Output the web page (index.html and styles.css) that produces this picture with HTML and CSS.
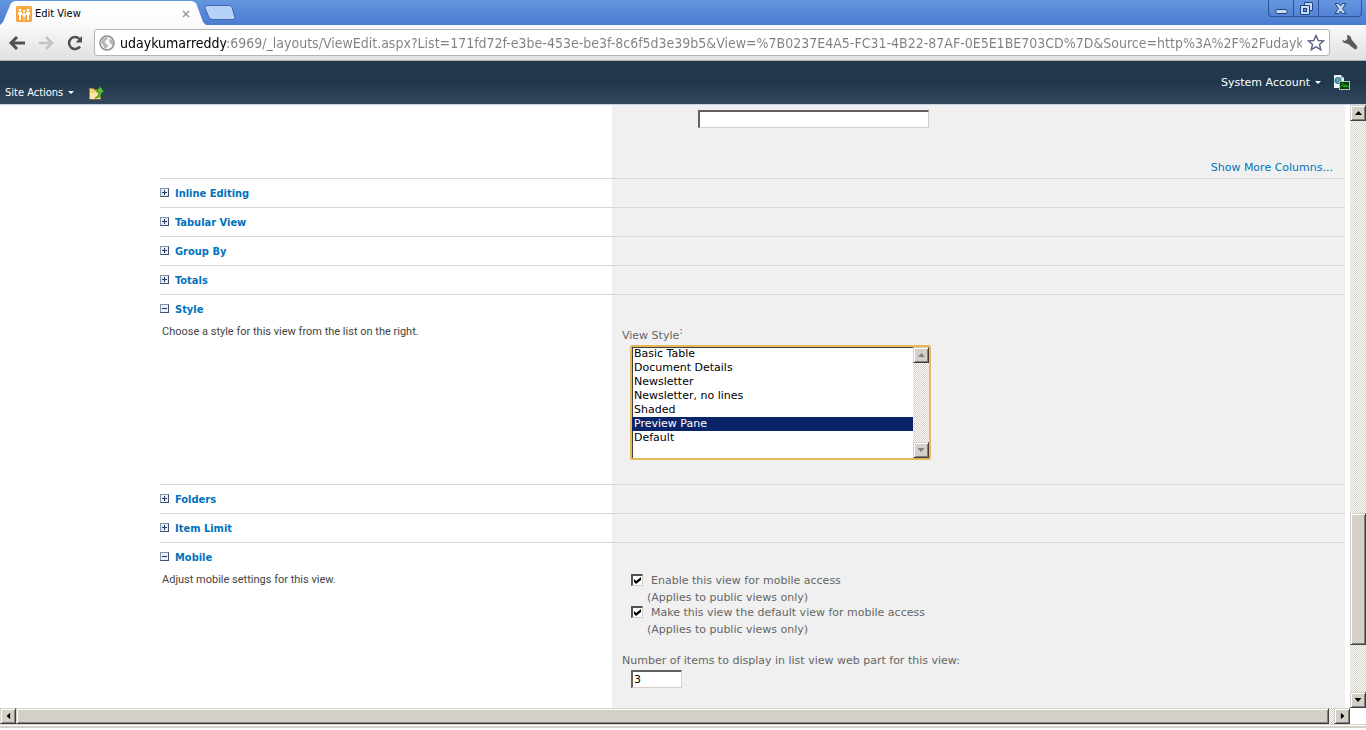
FILE: index.html
```html
<!DOCTYPE html>
<html lang="en">
<head>
  <meta charset="UTF-8" />
  <title>Edit View</title>
  <link rel="stylesheet" href="styles.css">
</head>
<body>
  <header class="tab-strip">
    <div class="tab">
      <svg class="favicon" width="16" height="16" viewBox="0 0 16 16">
        <rect width="16" height="16" rx="2" fill="#f58a14"/>
        <rect x="1" y="1" width="14" height="14" rx="1" fill="#f9a02c" stroke="#fbb65f"/>
        <g fill="#fff">
          <circle cx="4" cy="4" r="1.500"/><circle cx="12" cy="4" r="1.500"/><circle cx="8" cy="5" r="1.300"/>
          <path d="M2 6h4v3H5v5H3V9H2zM10 6h4v3h-1v5h-2V9h-1zM6.500 7h3v3.500h-1V14h-1v-3.500h-1z"/>
        </g>
      </svg>
      <span class="tab-title">Edit View</span>
      <button class="tab-close" aria-label="Close tab">
        <svg width="8" height="8" viewBox="0 0 8 8"><path d="M1 1l6 6M7 1l-6 6" stroke="#999" stroke-width="1.500"/></svg>
      </button>
    </div>
    <button class="new-tab" aria-label="New tab">
      <svg width="32" height="16" viewBox="0 0 32 16"><path d="M3 .5h22q2 0 3 2l3 10q0 2-2 2H9q-3 0-4-2L1 3Q1 .5 3 .5z" fill="#b5d1f5" stroke="#3c67ad"/></svg>
    </button>
    <div class="window-buttons">
      <button aria-label="Minimize"><svg width="13" height="13" viewBox="0 0 13 13"><rect x="1" y="7.500" width="11" height="4" rx="1" fill="#c6daf6" stroke="#24447e"/></svg></button>
      <button aria-label="Restore"><svg width="13" height="13" viewBox="0 0 13 13"><path d="M4.500.5h8v8h-3v4h-9v-9h4z" fill="#c6daf6" stroke="#24447e"/><path d="M4.500 3.500h5v5" fill="none" stroke="#24447e"/><rect x="3.500" y="6.500" width="3" height="3" fill="#5f8ed8" stroke="#24447e"/></svg></button>
      <button class="close" aria-label="Close"><svg width="13" height="11" viewBox="0 0 13 11"><path d="M1 .5h3.500l2 2.500 2-2.500H12L8.500 5.500l3.500 5H8.500l-2-2.500-2 2.500H1l3.500-5z" fill="#c6daf6" stroke="#24447e"/></svg></button>
    </div>
  </header>

  <nav class="toolbar">
    <button aria-label="Back"><svg width="18" height="16" viewBox="0 0 18 16"><path d="M17 8H4M9 2L3 8l6 6" fill="none" stroke="#505050" stroke-width="3"/></svg></button>
    <button aria-label="Forward"><svg width="18" height="16" viewBox="0 0 18 16"><path d="M2 8h12M9 2l6 6-6 6" fill="none" stroke="#c4c4c4" stroke-width="2.500"/></svg></button>
    <button aria-label="Reload"><svg width="18" height="16" viewBox="0 0 18 16"><path d="M14 11.500a6 6 0 1 1-.5-7.500" fill="none" stroke="#505050" stroke-width="2.500"/><path d="M16 1v6.500H9.500z" fill="#505050"/></svg></button>
    <div class="omnibox">
      <svg width="16" height="16" viewBox="0 0 16 16"><circle cx="8" cy="8" r="7" fill="#fafafa" stroke="#8c8c8c" stroke-width="1.500"/><path d="M3 4l4-2 2 1-1 2-2 1v2l2 1 1 2-2 3-2-1-1-3-2-2zM11 3l3 3v5l-2-2-2-2z" fill="#b9b9b9"/></svg>
      <input class="url" type="text" aria-label="Address" value="udaykumarreddy:6969/_layouts/ViewEdit.aspx?List=171fd72f-e3be-453e-be3f-8c6f5d3e39b5&amp;View=%7B0237E4A5-FC31-4B22-87AF-0E5E1BE703CD%7D&amp;Source=http%3A%2F%2Fudayku">
      <button class="star" aria-label="Bookmark this page"><svg width="18" height="17" viewBox="0 0 18 17"><path d="M9 1.500l2.200 5 5.300.4-4 3.500 1.300 5.300L9 12.900l-4.800 2.800 1.300-5.300-4-3.500 5.300-.4z" fill="#fff" stroke="#5f6b87" stroke-width="1.500"/></svg></button>
    </div>
    <button class="wrench" aria-label="Menu"><svg width="17" height="17" viewBox="0 0 17 17"><path d="M6 1q4 0 4.500 4.500L16 12q1 3-2 3.500L6.500 9.500Q2.500 10 1 6l3 1 2.500-2z" fill="#5a5a5a"/></svg></button>
  </nav>

  <div class="ribbon">
    <div class="ribbon-left">
      <button class="site-actions">Site Actions <span class="caret"></span></button>
      <button aria-label="Navigate up">
        <svg width="17" height="16" viewBox="0 0 17 16"><path d="M1.500 3.500h4l1 1.500h6v9h-11z" fill="#f4d77c" stroke="#a8842c"/><path d="M2 8h10v6H2z" fill="#fbe9a8"/><path d="M7 13q4-1 4-6H8.500L12 1.500 16 7h-2.500q0 6-6.500 6z" fill="#5fc437" stroke="#2c8516" stroke-width=".8"/></svg>
      </button>
    </div>
    <div class="ribbon-right">
      <button class="account">System Account <span class="caret"></span></button>
      <svg width="17" height="17" viewBox="0 0 17 17"><path d="M1 1h7l3 3v10H1z" fill="#eef4fb"/><path d="M8 1v3h3" fill="#7e9bbd"/><circle cx="5" cy="6.500" r="3.500" fill="#3c7fc4"/><path d="M3 5l3-1 1 2-3 3z" fill="#5bb45a"/><rect x="6.500" y="7.500" width="10" height="8" fill="#063b0b" stroke="#a9c9a9"/><path d="M7 13l2-2 2 2 2-2 3 2M9 9l5 4" fill="none" stroke="#2bb532"/></svg>
    </div>
  </div>

  <main class="viewport">
    <form class="settings">
      <section class="row columns-row">
        <div class="desc"></div>
        <div class="fields">
          <input class="box column-box" type="text" aria-label="Column name">
          <a class="more" href="#">Show More Columns...</a>
        </div>
      </section>
      <section class="row">
        <div class="desc"><button type="button" class="toggle"><i class="sign plus"></i>Inline Editing</button></div>
        <div class="fields"></div>
      </section>
      <section class="row">
        <div class="desc"><button type="button" class="toggle"><i class="sign plus"></i>Tabular View</button></div>
        <div class="fields"></div>
      </section>
      <section class="row">
        <div class="desc"><button type="button" class="toggle"><i class="sign plus"></i>Group By</button></div>
        <div class="fields"></div>
      </section>
      <section class="row">
        <div class="desc"><button type="button" class="toggle"><i class="sign plus"></i>Totals</button></div>
        <div class="fields"></div>
      </section>
      <section class="row">
        <div class="desc">
          <button type="button" class="toggle"><i class="sign"></i>Style</button>
          <p>Choose a style for this view from the list on the right.</p>
        </div>
        <div class="fields style-fields">
          <label for="viewStyle">View Style<sup>:</sup></label>
          <div class="listbox">
            <select id="viewStyle" size="8">
              <option>Basic Table</option>
              <option>Document Details</option>
              <option>Newsletter</option>
              <option>Newsletter, no lines</option>
              <option>Shaded</option>
              <option selected>Preview Pane</option>
              <option>Default</option>
            </select>
            <div class="scroll vertical disabled">
              <button type="button" class="arrow up" aria-label="Scroll up"></button>
              <button type="button" class="arrow down" aria-label="Scroll down"></button>
            </div>
          </div>
        </div>
      </section>
      <section class="row">
        <div class="desc"><button type="button" class="toggle"><i class="sign plus"></i>Folders</button></div>
        <div class="fields"></div>
      </section>
      <section class="row">
        <div class="desc"><button type="button" class="toggle"><i class="sign plus"></i>Item Limit</button></div>
        <div class="fields"></div>
      </section>
      <section class="row last">
        <div class="desc">
          <button type="button" class="toggle"><i class="sign"></i>Mobile</button>
          <p>Adjust mobile settings for this view.</p>
        </div>
        <div class="fields mobile-fields">
          <div class="check">
            <input type="checkbox" id="mobileView" checked>
            <label for="mobileView">Enable this view for mobile access</label>
          </div>
          <div class="note">(Applies to public views only)</div>
          <div class="check">
            <input type="checkbox" id="mobileDefault" checked>
            <label for="mobileDefault">Make this view the default view for mobile access</label>
          </div>
          <div class="note">(Applies to public views only)</div>
          <label class="count-label" for="itemCount">Number of items to display in list view web part for this view:</label>
          <input class="box count" type="text" id="itemCount" value="3">
        </div>
      </section>
    </form>
    <div class="scroll vertical">
      <button class="arrow up" aria-label="Scroll up"></button>
      <div class="track-before"></div>
      <div class="thumb"></div>
      <div class="track-after"></div>
      <button class="arrow down" aria-label="Scroll down"></button>
    </div>
  </main>

  <div class="bottom">
    <div class="scroll horizontal">
      <button class="arrow left" aria-label="Scroll left"></button>
      <div class="thumb"></div>
      <button class="arrow right" aria-label="Scroll right"></button>
    </div>
    <div class="corner"></div>
  </div>
  <footer class="edge"></footer>
</body>
</html>
```

FILE: styles.css
```css
* {
  box-sizing: border-box;
}
body {
  margin: 0;
  height: 100vh;
  display: flex;
  flex-direction: column;
  overflow: hidden;
  background: #fff;
  color: #666;
  font: 11px/16px "DejaVu Sans", Verdana, sans-serif;
}
button {
  margin: 0;
  padding: 0;
  border: 0;
  background: none;
  color: inherit;
  font: inherit;
  display: flex;
  align-items: center;
}

/* browser frame */
.tab-strip {
  display: flex;
  flex: none;
  height: 25px;
  background: linear-gradient(#6496e0, #4a7bd0);
}
.tab {
  display: flex;
  align-items: center;
  width: 206px;
  padding: 2px 16px 0;
  background: linear-gradient(#fff, #fafafa);
  clip-path: polygon(0 100%, 3px 88%, 11px 12%, 15px 4%, 192px 4%, 196px 12%, 203px 88%, 100% 100%);
}
.tab-title {
  flex: 1;
  margin-left: 3px;
  color: #000;
  font-family: "DejaVu Sans Condensed", Tahoma, sans-serif;
}
.new-tab {
  align-self: flex-start;
  margin: 5px 0 0 -2px;
}
.window-buttons {
  display: flex;
  height: 17px;
  margin: 0 4px 0 auto;
  border: 1px solid #2f5296;
  border-top: 0;
  border-radius: 0 0 4px 4px;
}
.window-buttons button {
  justify-content: center;
  width: 25px;
  border-right: 1px solid #2f5296;
}
.window-buttons .close {
  width: 42px;
  border-right: 0;
}
.toolbar {
  display: flex;
  flex: none;
  align-items: center;
  gap: 11px;
  height: 36px;
  padding: 0 8px;
  background: linear-gradient(#fafafa, #e0e0e0);
  border-bottom: 1px solid #b0b0b0;
}
.omnibox {
  flex: 1;
  display: flex;
  align-items: center;
  gap: 5px;
  height: 27px;
  margin-left: -1px;
  padding: 0 4px;
  border: 1px solid #b4b4b4;
  border-radius: 3px;
  background: #fff;
}
.url {
  flex: 1;
  min-width: 0;
  height: 22px;
  padding: 0;
  border: 0;
  background: linear-gradient(90deg, #000 106px, #808080 106px);
  -webkit-background-clip: text;
  background-clip: text;
  color: transparent;
  font: 14px "DejaVu Sans Condensed", Tahoma, sans-serif;
}

/* ribbon */
.ribbon {
  display: flex;
  flex: none;
  justify-content: space-between;
  height: 44px;
  padding: 0 16px 0 5px;
  background: linear-gradient(#21374c 50%, #33485f);
  border-bottom: 1px solid #c5d3e3;
  color: #fff;
}
.ribbon-left {
  display: flex;
  align-items: center;
  gap: 14px;
  padding-top: 20px;
}
.ribbon-right {
  display: flex;
  align-items: center;
  gap: 12px;
}
.site-actions {
  font-family: "DejaVu Sans Condensed", Tahoma, sans-serif;
}
.caret {
  margin-left: 5px;
  border: 3px solid transparent;
  border-top-color: #fff;
  border-bottom: 0;
}

/* settings */
.viewport {
  display: flex;
  flex: 1;
  min-height: 0;
}
.settings {
  display: flex;
  flex-direction: column;
  flex: 1;
  padding: 0 5px 0 160px;
  overflow: hidden;
}
.row {
  display: grid;
  flex: none;
  grid-template-columns: 452px 1fr;
  min-height: 29px;
  border-top: 1px solid #d8d8d8;
}
.columns-row {
  min-height: 73px;
  border-top: 0;
}
.last {
  flex: 1;
}
.fields {
  padding: 0 10px;
  background: #f0f0f0;
}
.desc {
  padding-top: 7px;
  font-family: "DejaVu Sans Condensed", Tahoma, sans-serif;
}
.desc p {
  margin: 6px 2px 0;
  color: #444;
  font-family: Roboto, Tahoma, sans-serif;
}
.toggle {
  align-items: flex-start;
  color: #0072bc;
  font-weight: bold;
}
.sign {
  width: 9px;
  height: 9px;
  margin: 2px 6px 0 0;
  border: 1px solid #8192ab;
  border-right-color: #3b4f70;
  border-bottom-color: #3b4f70;
  background: linear-gradient(#26395c, #26395c) center / 5px 1px no-repeat, #e9eef5;
}
.plus {
  background: linear-gradient(#26395c, #26395c) center / 5px 1px no-repeat, linear-gradient(#26395c, #26395c) center / 1px 5px no-repeat, #e9eef5;
}
.box {
  display: block;
  height: 18px;
  padding: 0 1px;
  border: 1px solid #d4d0c8;
  border-top: 2px solid #606060;
  border-left: 2px solid #606060;
  background: #fff;
  color: #000;
  font: inherit;
}
.column-box {
  width: 231px;
  margin: 5px 0 32px 76px;
}
.more {
  display: block;
  padding-right: 2px;
  color: #0072bc;
  text-align: right;
  text-decoration: none;
}
.style-fields {
  padding-top: 33px;
  padding-bottom: 24px;
}
.style-fields label {
  display: block;
  height: 17px;
}
sup {
  font-size: 11px;
  line-height: 0;
}
.listbox {
  display: flex;
  width: 301px;
  height: 115px;
  margin-left: 8px;
  border: 2px solid #e5b85c;
  border-radius: 2px;
  background: #fff;
}
.listbox select {
  flex: 1;
  height: 111px;
  padding: 0;
  border: 0;
  border-radius: 0;
  outline: 0;
  background: #fff;
  box-shadow: inset 1px 1px #404040;
  color: #000;
  font: inherit;
  overflow: hidden;
}
.listbox option {
  min-height: 14px;
  height: 14px;
  padding: 0 2px;
  line-height: 14px;
}
.listbox option:checked {
  background: #0a246a linear-gradient(#0a246a, #0a246a);
  color: #fff;
  -webkit-text-fill-color: #fff;
}
.mobile-fields {
  padding-top: 30px;
}
.check {
  display: flex;
  align-items: flex-start;
  gap: 8px;
  height: 17px;
  padding-left: 9px;
}
.check input {
  appearance: none;
  width: 12px;
  height: 12px;
  margin: 1px 0 0;
  border: 1px solid #d4d0c8;
  border-top: 2px solid #505050;
  border-left: 2px solid #505050;
  background: #fff;
}
.check input:checked::before {
  content: "";
  display: block;
  width: 7px;
  height: 7px;
  margin: 1px;
  background: #000;
  clip-path: polygon(0 29%, 29% 57%, 100% 0, 100% 43%, 29% 100%, 0 71%);
}
.note {
  height: 15px;
  padding-left: 25px;
  line-height: 15px;
}
.count-label {
  display: block;
  margin: 16px 0 1px;
}
.count {
  width: 51px;
  margin-left: 9px;
}

/* scrollbars */
.scroll {
  display: flex;
  flex: none;
  background: repeating-conic-gradient(#d4d0c8 0 25%, #fff 0 50%) 0 0 / 2px 2px;
}
.vertical {
  flex-direction: column;
  width: 16px;
}
.arrow,
.thumb {
  background: #d4d0c8;
  border: 1px solid #d4d0c8;
  border-right-color: #404040;
  border-bottom-color: #404040;
  box-shadow: inset 1px 1px #fff, inset -1px -1px #808080;
}
.arrow {
  flex: none;
  justify-content: center;
  width: 16px;
  height: 16px;
}
.arrow::before {
  content: "";
  width: 7px;
  height: 4px;
  background: #000;
  clip-path: polygon(0 0, 100% 0, 50% 100%);
}
.up::before {
  transform: rotate(180deg);
}
.left::before {
  transform: rotate(90deg);
}
.right::before {
  transform: rotate(-90deg);
}
.disabled {
  justify-content: space-between;
}
.disabled .arrow::before {
  background: #808080;
}
.track-before {
  flex: 393;
}
.vertical .thumb {
  flex: 131;
}
.track-after {
  flex: 47;
}
.bottom {
  display: flex;
  flex: none;
  height: 16px;
}
.horizontal {
  flex: 1;
}
.horizontal .thumb {
  flex: 1;
  margin-right: 5px;
}
.corner {
  width: 16px;
  background: #fff;
}
.edge {
  flex: none;
  height: 6px;
  background: linear-gradient(#d4d0c8 1px, #fff 1px, #fff 2px, #d4d0c8 2px, #d4d0c8 4px, #fff 4px);
}
```
